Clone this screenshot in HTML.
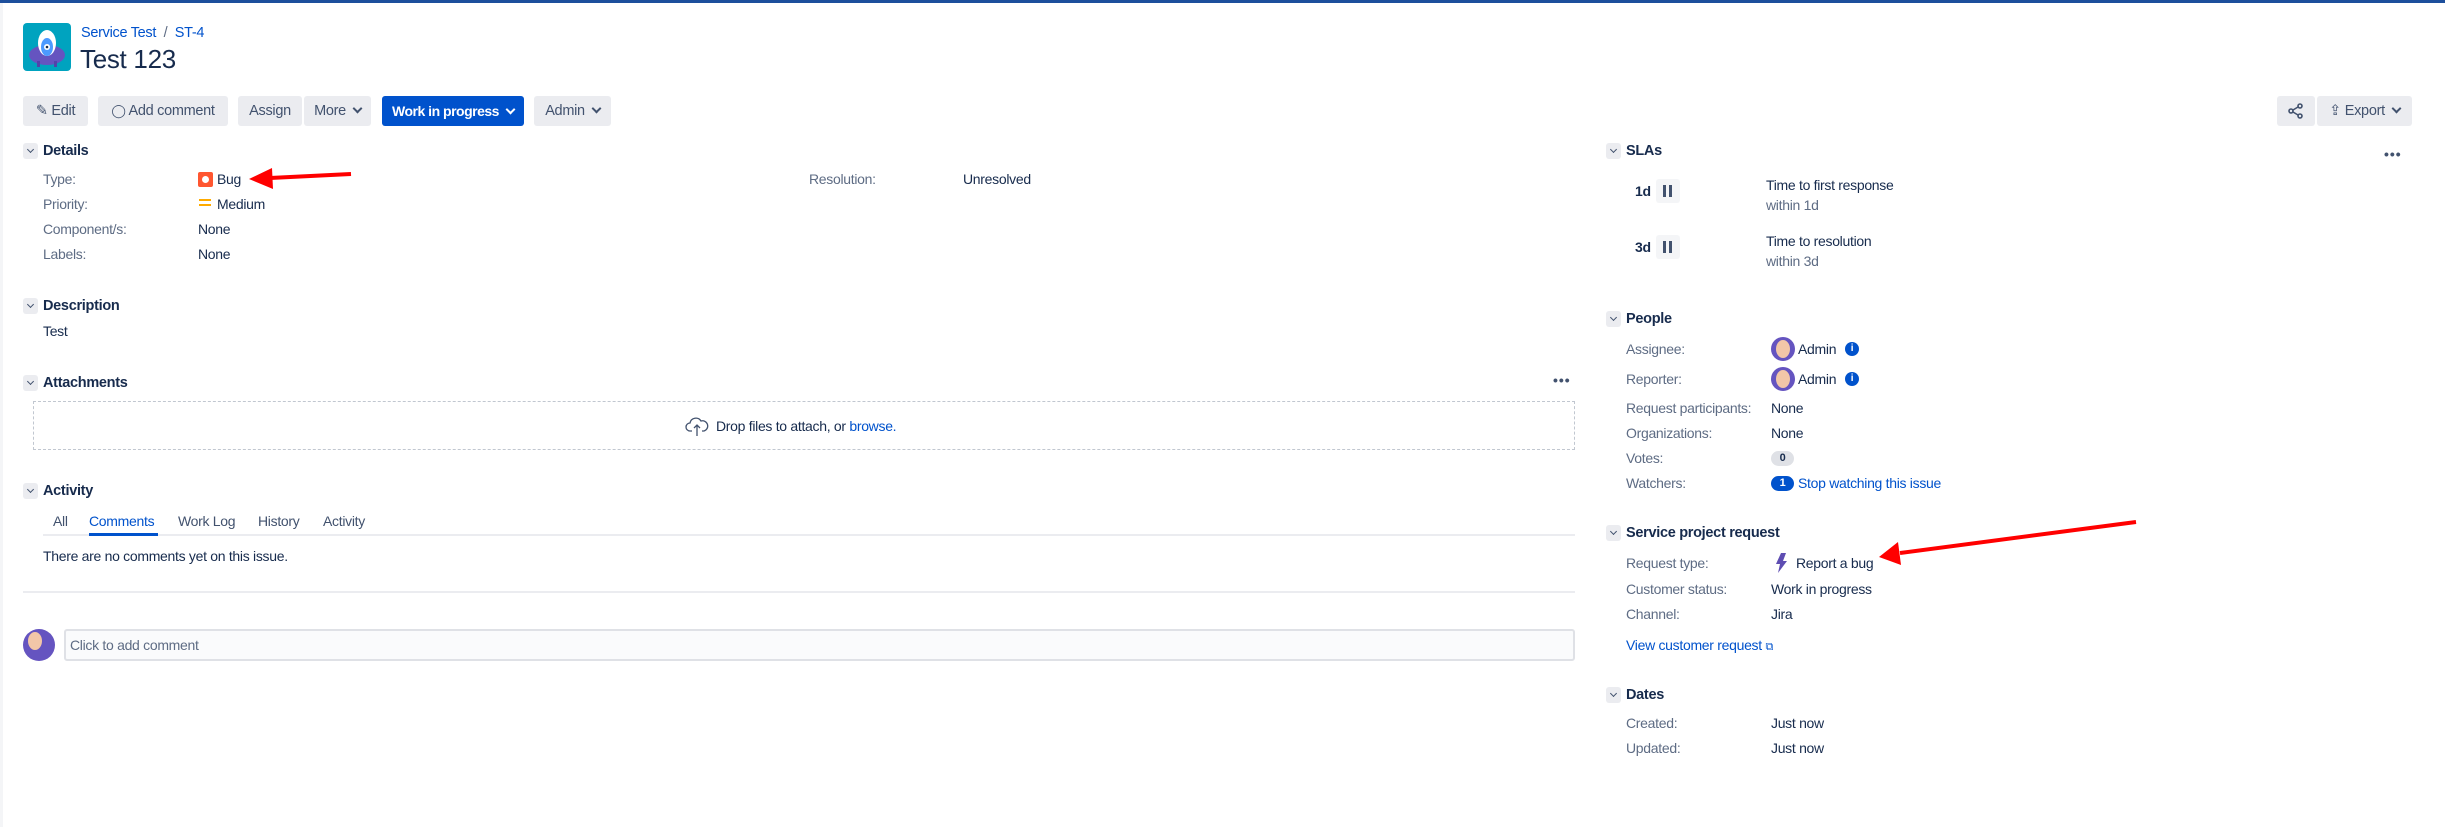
<!DOCTYPE html>
<html><head><meta charset="utf-8">
<style>
*{box-sizing:border-box;margin:0;padding:0}
body{width:2445px;height:827px;background:#fff;position:relative;overflow:hidden;font-family:"Liberation Sans",Arial,sans-serif;color:#172b4d;font-size:14px;letter-spacing:-0.3px}
.a{position:absolute;white-space:nowrap;line-height:20px}
.l{color:#5e6c84}
.lk{color:#0052cc}
.h{font-weight:bold;font-size:14.5px}
.chev{position:absolute;width:15px;height:16px;background:#ebecf0;border-radius:3px}
.chev:after{content:"";position:absolute;left:5px;top:4px;width:4px;height:4px;border-right:1.8px solid #42526e;border-bottom:1.8px solid #42526e;transform:rotate(45deg)}
.btn{position:absolute;top:96px;height:30px;background:#ebecf0;border-radius:3px;color:#42526e;font-size:14.5px;line-height:30px;text-align:center;white-space:nowrap}
.dd:after{content:"";display:inline-block;width:5px;height:5px;border-right:2px solid currentColor;border-bottom:2px solid currentColor;transform:rotate(45deg);margin-left:8px;position:relative;top:-3px}
.av{position:absolute;width:24px;height:24px;border-radius:50%;background:#6554c0;overflow:hidden}
.av:after{content:"";position:absolute;left:5px;top:3px;width:14px;height:18px;border-radius:50%;background:#f2c6a8}
</style></head><body>
<div style="position:absolute;left:0;top:0;width:2445px;height:3px;background:#1d4f9c"></div>
<div style="position:absolute;left:0;top:3px;width:3px;height:824px;background:#f4f5f7"></div>

<svg style="position:absolute;left:23px;top:23px" width="48" height="48" viewBox="0 0 48 48"><rect width="48" height="48" rx="4" fill="#00a3bf"/><ellipse cx="24" cy="32" rx="18" ry="10" fill="#6554c0"/><rect x="14" y="38" width="3" height="6" fill="#5243aa"/><rect x="31" y="38" width="3" height="6" fill="#5243aa"/><ellipse cx="24" cy="20" rx="9" ry="13" fill="#fff"/><ellipse cx="24" cy="24" rx="6" ry="9" fill="#4c9aff"/><circle cx="24" cy="24" r="3" fill="#fff"/><circle cx="24" cy="24" r="1.3" fill="#172b4d"/></svg>
<div class="a lk" style="left:81px;top:23px;font-size:14.5px">Service Test &nbsp;<span style="color:#5e6c84">/</span>&nbsp; ST-4</div>
<div class="a" style="left:80px;top:44px;font-size:26px;line-height:30px">Test 123</div>

<div class="btn" style="left:23px;width:65px">✎ Edit</div>
<div class="btn" style="left:98px;width:130px"><span style="font-size:13px">◯</span> Add comment</div>
<div class="btn" style="left:238px;width:64px">Assign</div>
<div class="btn dd" style="left:304px;width:67px">More</div>
<div class="btn dd" style="left:382px;width:142px;background:#0052cc;color:#fff;font-weight:bold;font-size:14px;letter-spacing:-0.5px">Work in progress</div>
<div class="btn dd" style="left:534px;width:77px">Admin</div>
<div class="btn" style="left:2277px;width:38px"><svg width="16" height="16" viewBox="0 0 16 16" style="margin-top:7px"><circle cx="3" cy="8" r="2" fill="none" stroke="#42526e" stroke-width="1.6"/><circle cx="12" cy="3" r="2" fill="none" stroke="#42526e" stroke-width="1.6"/><circle cx="12" cy="13" r="2" fill="none" stroke="#42526e" stroke-width="1.6"/><path d="M5 7L10 4M5 9L10 12" stroke="#42526e" stroke-width="1.6"/></svg></div>
<div class="btn dd" style="left:2317px;width:95px">⇪ Export</div>

<!-- Details -->
<div class="chev" style="left:23px;top:143px"></div>
<div class="a h" style="left:43px;top:141px">Details</div>
<div class="a l" style="left:43px;top:169px">Type:</div>
<div style="position:absolute;left:198px;top:172px;width:15px;height:15px;background:#ff5630;border-radius:2px"><div style="position:absolute;left:4px;top:4px;width:7px;height:7px;border-radius:50%;background:#fff"></div></div>
<div class="a" style="left:217px;top:169px">Bug</div>
<div class="a l" style="left:809px;top:169px">Resolution:</div>
<div class="a" style="left:963px;top:169px">Unresolved</div>
<div class="a l" style="left:43px;top:194px">Priority:</div>
<div style="position:absolute;left:199px;top:199px;width:12px;height:2px;background:#ffab00;box-shadow:0 5px 0 #ffab00"></div>
<div class="a" style="left:217px;top:194px">Medium</div>
<div class="a l" style="left:43px;top:219px">Component/s:</div>
<div class="a" style="left:198px;top:219px">None</div>
<div class="a l" style="left:43px;top:244px">Labels:</div>
<div class="a" style="left:198px;top:244px">None</div>

<!-- Description -->
<div class="chev" style="left:23px;top:298px"></div>
<div class="a h" style="left:43px;top:296px">Description</div>
<div class="a" style="left:43px;top:321px">Test</div>

<!-- Attachments -->
<div class="chev" style="left:23px;top:375px"></div>
<div class="a h" style="left:43px;top:373px">Attachments</div>
<div class="a" style="left:1553px;top:370px;color:#42526e;font-weight:bold;letter-spacing:1px">•••</div>
<div style="position:absolute;left:33px;top:401px;width:1542px;height:49px;border:1px dashed #c1c7d0"></div>
<svg style="position:absolute;left:685px;top:415px" width="24" height="22" viewBox="0 0 24 22"><path d="M7 16H5a4 4 0 0 1 0-8 6 6 0 0 1 11-2 5 5 0 0 1 3 10h-2" fill="none" stroke="#42526e" stroke-width="1.3"/><path d="M12 21V10M9 13l3-3 3 3" fill="none" stroke="#42526e" stroke-width="1.3"/></svg>
<div class="a" style="left:716px;top:416px">Drop files to attach, or <span class="lk">browse.</span></div>

<!-- Activity -->
<div class="chev" style="left:23px;top:483px"></div>
<div class="a h" style="left:43px;top:481px">Activity</div>
<div class="a" style="left:53px;top:511px;color:#42526e">All</div>
<div class="a lk" style="left:89px;top:511px">Comments</div>
<div class="a" style="left:178px;top:511px;color:#42526e">Work Log</div>
<div class="a" style="left:258px;top:511px;color:#42526e">History</div>
<div class="a" style="left:323px;top:511px;color:#42526e">Activity</div>
<div style="position:absolute;left:43px;top:534px;width:1532px;height:2px;background:#ebecf0"></div>
<div style="position:absolute;left:89px;top:533px;width:69px;height:3px;background:#0052cc"></div>
<div class="a" style="left:43px;top:546px">There are no comments yet on this issue.</div>
<div style="position:absolute;left:23px;top:591px;width:1552px;height:2px;background:#ebecf0"></div>
<div class="av" style="left:23px;top:629px;width:32px;height:32px"></div>
<div style="position:absolute;left:64px;top:629px;width:1511px;height:32px;border:2px solid #dfe1e6;border-radius:3px;background:#fafbfc"></div>
<div class="a l" style="left:70px;top:635px">Click to add comment</div>

<!-- SLAs -->
<div class="chev" style="left:1606px;top:143px"></div>
<div class="a h" style="left:1626px;top:141px">SLAs</div>
<div class="a" style="left:2384px;top:144px;color:#42526e;font-weight:bold;letter-spacing:1px">•••</div>
<div class="a" style="left:1635px;top:181px;font-weight:bold">1d</div>
<div style="position:absolute;left:1656px;top:179px;width:24px;height:24px;background:#f4f5f7;border-radius:3px"><div style="position:absolute;left:7px;top:6px;width:3px;height:12px;background:#42526e;box-shadow:6px 0 0 #42526e"></div></div>
<div class="a" style="left:1766px;top:175px">Time to first response</div>
<div class="a l" style="left:1766px;top:195px">within 1d</div>
<div class="a" style="left:1635px;top:237px;font-weight:bold">3d</div>
<div style="position:absolute;left:1656px;top:235px;width:24px;height:24px;background:#f4f5f7;border-radius:3px"><div style="position:absolute;left:7px;top:6px;width:3px;height:12px;background:#42526e;box-shadow:6px 0 0 #42526e"></div></div>
<div class="a" style="left:1766px;top:231px">Time to resolution</div>
<div class="a l" style="left:1766px;top:251px">within 3d</div>

<!-- People -->
<div class="chev" style="left:1606px;top:311px"></div>
<div class="a h" style="left:1626px;top:309px">People</div>
<div class="a l" style="left:1626px;top:339px">Assignee:</div>
<div class="av" style="left:1771px;top:337px"></div>
<div class="a" style="left:1798px;top:339px">Admin</div>
<div style="position:absolute;left:1845px;top:342px;width:14px;height:14px;border-radius:50%;background:#0052cc;color:#fff;font-size:10px;font-weight:bold;text-align:center;line-height:14px">i</div>
<div class="a l" style="left:1626px;top:369px">Reporter:</div>
<div class="av" style="left:1771px;top:367px"></div>
<div class="a" style="left:1798px;top:369px">Admin</div>
<div style="position:absolute;left:1845px;top:372px;width:14px;height:14px;border-radius:50%;background:#0052cc;color:#fff;font-size:10px;font-weight:bold;text-align:center;line-height:14px">i</div>
<div class="a l" style="left:1626px;top:398px">Request participants:</div>
<div class="a" style="left:1771px;top:398px">None</div>
<div class="a l" style="left:1626px;top:423px">Organizations:</div>
<div class="a" style="left:1771px;top:423px">None</div>
<div class="a l" style="left:1626px;top:448px">Votes:</div>
<div style="position:absolute;left:1771px;top:451px;width:23px;height:15px;border-radius:8px;background:#dfe1e6;font-size:11px;font-weight:bold;text-align:center;line-height:15px">0</div>
<div class="a l" style="left:1626px;top:473px">Watchers:</div>
<div style="position:absolute;left:1771px;top:476px;width:23px;height:15px;border-radius:8px;background:#0052cc;color:#fff;font-size:11px;font-weight:bold;text-align:center;line-height:15px">1</div>
<div class="a lk" style="left:1798px;top:473px">Stop watching this issue</div>

<!-- Service project request -->
<div class="chev" style="left:1606px;top:525px"></div>
<div class="a h" style="left:1626px;top:523px">Service project request</div>
<div class="a l" style="left:1626px;top:553px">Request type:</div>
<svg style="position:absolute;left:1775px;top:553px" width="12" height="20" viewBox="0 0 12 20"><path d="M6 0h5L8 8h4L3 20l2-9H1z" fill="#5e4db2"/></svg>
<div class="a" style="left:1796px;top:553px">Report a bug</div>
<div class="a l" style="left:1626px;top:579px">Customer status:</div>
<div class="a" style="left:1771px;top:579px">Work in progress</div>
<div class="a l" style="left:1626px;top:604px">Channel:</div>
<div class="a" style="left:1771px;top:604px">Jira</div>
<div class="a lk" style="left:1626px;top:635px">View customer request <span style="font-size:11px">⧉</span></div>

<!-- Dates -->
<div class="chev" style="left:1606px;top:687px"></div>
<div class="a h" style="left:1626px;top:685px">Dates</div>
<div class="a l" style="left:1626px;top:713px">Created:</div>
<div class="a" style="left:1771px;top:713px">Just now</div>
<div class="a l" style="left:1626px;top:738px">Updated:</div>
<div class="a" style="left:1771px;top:738px">Just now</div>

<!-- red arrows -->
<svg style="position:absolute;left:0;top:0" width="2445" height="827">
<path d="M351 174L270 178" stroke="#f00" stroke-width="4"/><path d="M249 179L272 168L273 189Z" fill="#f00"/>
<path d="M2136 522L1900 553" stroke="#f00" stroke-width="4"/><path d="M1879 557L1898 542L1901 565Z" fill="#f00"/>
</svg>
</body></html>
